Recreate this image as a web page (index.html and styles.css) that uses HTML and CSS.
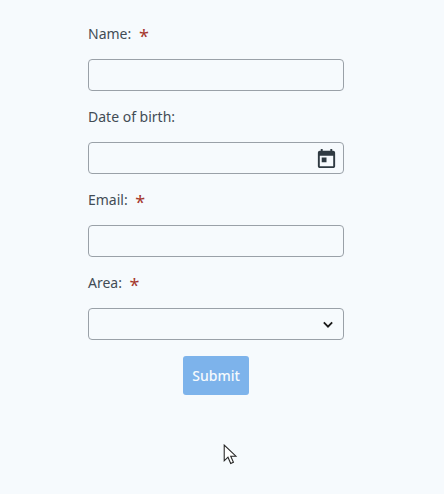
FILE: index.html
```html
<!DOCTYPE html>
<html lang="en">
<head>
   <meta charset="UTF-8">
   <meta name="viewport" content="width=device-width, initial-scale=1.0">
   <title>Form</title>
   <link rel="stylesheet" href="styles.css">
</head>
<body>
   <form class="form">
      <div class="field">
         <label class="field-label" for="name">Name: <span class="required">*</span></label>
         <input class="field-input" id="name" type="text">
      </div>
      <div class="field">
         <label class="field-label" for="dob">Date of birth:</label>
         <div class="field-input with-icon" id="dob">
            <svg class="calendar-icon" viewBox="0 0 24 24" width="23" height="23">
               <path fill="#2f3a42" d="M19 4h-1V2h-2v2H8V2H6v2H5c-1.1 0-2 .9-2 2v14c0 1.1.9 2 2 2h14c1.1 0 2-.9 2-2V6c0-1.1-.9-2-2-2zm0 16H5V9h14v11zM7 11h5v5H7z"/>
            </svg>
         </div>
      </div>
      <div class="field">
         <label class="field-label" for="email">Email: <span class="required">*</span></label>
         <input class="field-input" id="email" type="text">
      </div>
      <div class="field">
         <label class="field-label" for="area">Area: <span class="required">*</span></label>
         <div class="field-input with-icon" id="area">
            <svg class="chevron-icon" viewBox="0 0 12 8" width="10" height="7">
               <path fill="none" stroke="#1a1a1a" stroke-width="2.2" d="M1 1.5l5 5 5-5"/>
            </svg>
         </div>
      </div>
      <div class="actions">
         <button class="submit" type="button">Submit</button>
      </div>
   </form>
   <svg class="cursor" viewBox="0 0 14 21" width="15" height="22">
      <path fill="#fff" stroke="#222" stroke-width="1" d="M1 1v15l3.6-3.4 2.6 6 2.6-1.1-2.6-5.9h5z"/>
   </svg>
</body>
</html>
```

FILE: styles.css
```css
*{
   margin: 0;
   padding: 0;
   box-sizing: border-box;
}
body{
   position: relative;
   height: 494px;
   overflow: hidden;
   background: #f6fafd;
   font-family: "Noto Sans", "Open Sans", sans-serif;
   font-size: 14px;
   color: #424c55;
}
.form{
   width: 256px;
   margin-left: 88px;
   padding-top: 24px;
}
.field{
   height: 83px;
}
.field-label{
   display: block;
   height: 35px;
   line-height: 20px;
   white-space: pre-wrap;
}
.required{
   margin-left: 4px;
   font-size: 18px;
   line-height: 1;
   vertical-align: -4px;
   color: #a5372d;
}
.field-input{
   display: block;
   width: 100%;
   height: 32px;
   background: #f6fafd;
   border: 1px solid #9aa1a8;
   border-radius: 4px;
}
.with-icon{
   display: flex;
   align-items: center;
   justify-content: flex-end;
}
.calendar-icon{
   margin-right: 5px;
}
.chevron-icon{
   margin-right: 10px;
}
.actions{
   display: flex;
   justify-content: center;
}
.submit{
   width: 66px;
   height: 39px;
   border: 0;
   border-radius: 3px;
   background: #7db3eb;
   color: #f6fafd;
   font-family: inherit;
   font-size: 14px;
   font-weight: 500;
}
.cursor{
   position: absolute;
   left: 223px;
   top: 444px;
}
```
